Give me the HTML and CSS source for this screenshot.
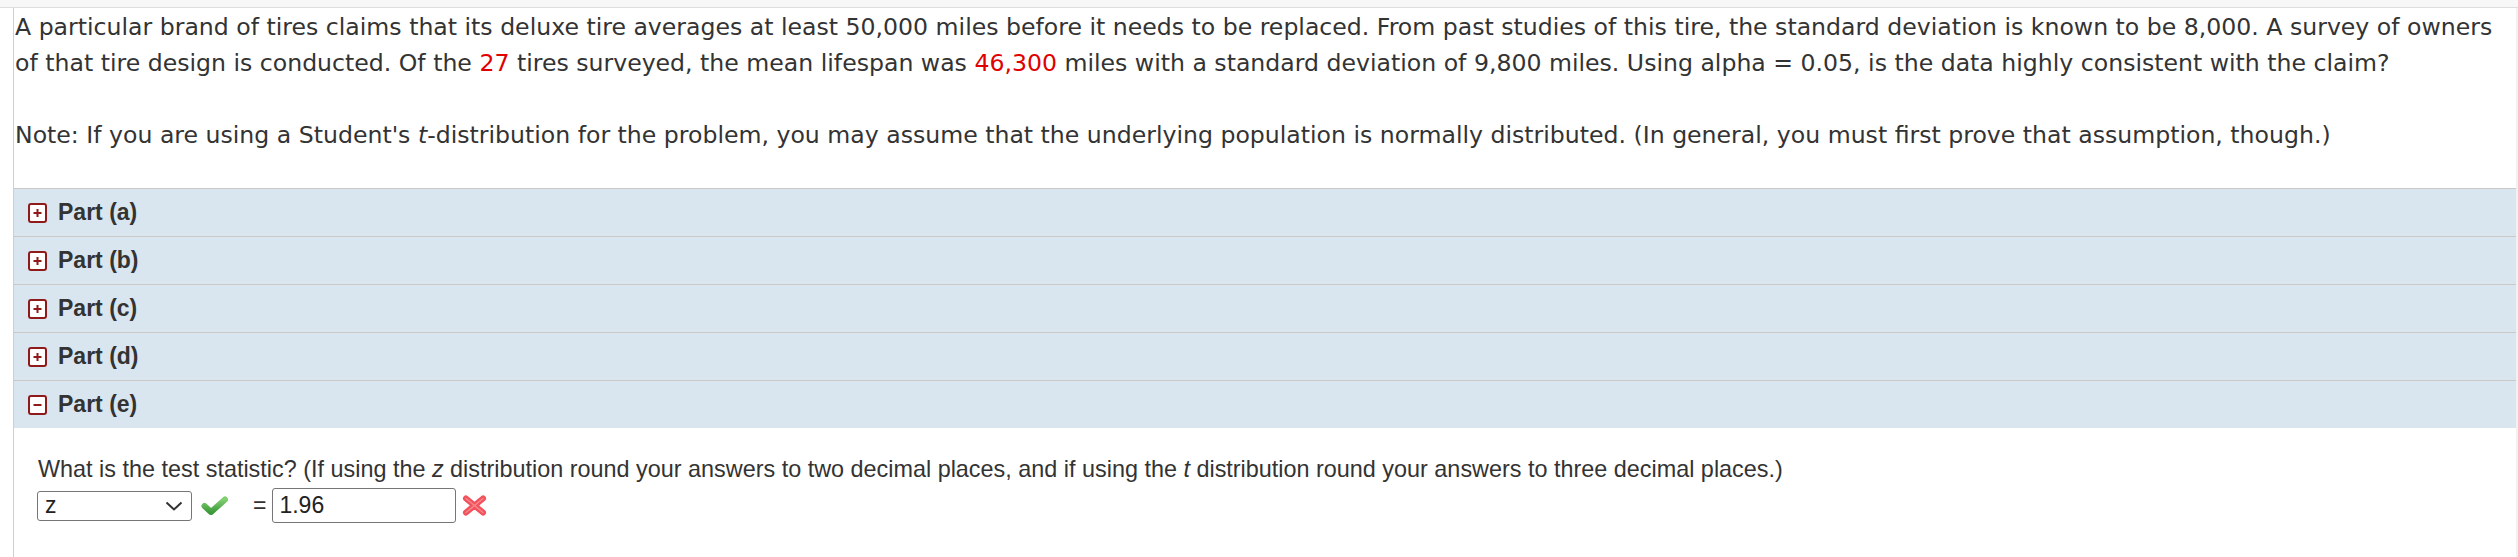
FILE: index.html
```html
<!DOCTYPE html>
<html lang="en">
<head>
<meta charset="utf-8">
<title>Hypothesis test question</title>
<link rel="stylesheet" href="styles.css">
</head>
<body>
<div class="topband"></div>
<div class="page">
  <div class="gutter-left"></div>
  <main class="main">
    <div class="question">
      <p class="stem">A particular brand of tires claims that its deluxe tire averages at least 50,000 miles before it needs to be replaced. From past studies of this tire, the standard deviation is known to be 8,000. A survey of owners of that tire design is conducted. Of the <span class="red">27</span> tires surveyed, the mean lifespan was <span class="red">46,300</span> miles with a standard deviation of 9,800 miles. Using alpha = 0.05, is the data highly consistent with the claim?</p>
      <p class="stem note">Note: If you are using a Student's <i>t</i>-distribution for the problem, you may assume that the underlying population is normally distributed. (In general, you must first prove that assumption, though.)</p>
    </div>

    <div class="parts">
      <div class="part">
        <span class="toggle"><svg viewBox="0 0 19 20" width="19" height="20"><rect x="1" y="1" width="17" height="18" rx="2" ry="2" fill="#fff" stroke="#8e1a1a" stroke-width="2"/><path d="M5.5 10 H13.5 M9.5 6 V14" stroke="#8e1a1a" stroke-width="2"/></svg></span>
        <span class="part-label">Part (a)</span>
      </div>
      <div class="part">
        <span class="toggle"><svg viewBox="0 0 19 20" width="19" height="20"><rect x="1" y="1" width="17" height="18" rx="2" ry="2" fill="#fff" stroke="#8e1a1a" stroke-width="2"/><path d="M5.5 10 H13.5 M9.5 6 V14" stroke="#8e1a1a" stroke-width="2"/></svg></span>
        <span class="part-label">Part (b)</span>
      </div>
      <div class="part">
        <span class="toggle"><svg viewBox="0 0 19 20" width="19" height="20"><rect x="1" y="1" width="17" height="18" rx="2" ry="2" fill="#fff" stroke="#8e1a1a" stroke-width="2"/><path d="M5.5 10 H13.5 M9.5 6 V14" stroke="#8e1a1a" stroke-width="2"/></svg></span>
        <span class="part-label">Part (c)</span>
      </div>
      <div class="part">
        <span class="toggle"><svg viewBox="0 0 19 20" width="19" height="20"><rect x="1" y="1" width="17" height="18" rx="2" ry="2" fill="#fff" stroke="#8e1a1a" stroke-width="2"/><path d="M5.5 10 H13.5 M9.5 6 V14" stroke="#8e1a1a" stroke-width="2"/></svg></span>
        <span class="part-label">Part (d)</span>
      </div>
      <div class="part">
        <span class="toggle"><svg viewBox="0 0 19 20" width="19" height="20"><rect x="1" y="1" width="17" height="18" rx="2" ry="2" fill="#fff" stroke="#8e1a1a" stroke-width="2"/><path d="M5.5 10 H13.5" stroke="#8e1a1a" stroke-width="2"/></svg></span>
        <span class="part-label">Part (e)</span>
      </div>
    </div>

    <div class="part-body">
      <p class="prompt">What is the test statistic? (If using the <i>z</i> distribution round your answers to two decimal places, and if using the <i>t</i> distribution round your answers to three decimal places.)</p>
      <div class="controls">
        <div class="select">
          <span class="select-value">z</span>
          <svg class="chevron" viewBox="0 0 18 10" width="18" height="10"><path d="M1.5 1.5 L9 8.5 L16.5 1.5" fill="none" stroke="#333" stroke-width="2"/></svg>
        </div>
        <svg class="check" viewBox="0 0 27 19" width="27" height="19">
          <defs>
            <linearGradient id="g" x1="0" y1="0" x2="0" y2="1">
              <stop offset="0" stop-color="#82cf72"/>
              <stop offset="1" stop-color="#3d9a3a"/>
            </linearGradient>
          </defs>
          <path d="M3.5 10 L10 16 L24 3.5" fill="none" stroke="url(#g)" stroke-width="6" stroke-linecap="round" stroke-linejoin="round"/>
        </svg>
        <span class="equals">=</span>
        <div class="answer">1.96</div>
        <svg class="cross" viewBox="0 0 25 21" width="25" height="21">
          <path d="M4 3.5 L21 17.5 M21 3.5 L4 17.5" fill="none" stroke="#f2525c" stroke-width="6" stroke-linecap="round"/>
          <path d="M4 3.5 L21 17.5 M21 3.5 L4 17.5" fill="none" stroke="#f7858b" stroke-width="1.5" stroke-linecap="round"/>
        </svg>
      </div>
    </div>
  </main>
  <div class="gutter-right"></div>
</div>
</body>
</html>
```

FILE: styles.css
```css
html, body {
  margin: 0;
  padding: 0;
  background: #ffffff;
}

body {
  height: 557px;
  display: flex;
  flex-direction: column;
  overflow: hidden;
}

.topband {
  height: 7px;
  background: #f7f7f7;
  border-bottom: 1px solid #dedede;
  flex: none;
}

.page {
  flex: 1;
  display: flex;
}

.gutter-left {
  width: 13px;
  flex: none;
}

.gutter-right {
  width: 2px;
  flex: none;
  background: #f1f1f1;
}

.main {
  flex: 1;
  border-left: 1px solid #cfcfcf;
  background: #fff;
}

.question {
  padding: 1px 6px 0 1px;
}

.stem {
  margin: 0;
  font-family: "DejaVu Sans", Verdana, sans-serif;
  font-size: 23.6px;
  line-height: 36px;
  color: #333333;
}

.stem i {
  font-style: oblique;
}

.note {
  margin-top: 36px;
}

.red {
  color: #e00000;
}

.parts {
  margin-top: 35px;
}

.part {
  height: 47px;
  border-top: 1px solid #c9c9c9;
  background: #d9e6f0;
  display: flex;
  align-items: center;
  padding-left: 14px;
  gap: 11px;
}

.toggle {
  display: flex;
  width: 19px;
  height: 20px;
}

.part-label {
  font-family: "Liberation Sans", Arial, sans-serif;
  font-weight: bold;
  font-size: 23px;
  color: #333333;
}

.part-body {
  padding: 0 23px;
  font-family: "Liberation Sans", Arial, sans-serif;
  color: #333333;
}

.prompt {
  margin: 28px 0 0 1px;
  font-size: 23.4px;
  line-height: 26px;
}

.controls {
  margin-top: 6px;
  display: flex;
  align-items: center;
  height: 35px;
}

.select {
  border: 1px solid #767676;
  border-radius: 3px;
  display: flex;
  align-items: center;
  justify-content: space-between;
  padding: 0 8px 0 7px;
  box-sizing: border-box;
  width: 155px;
  height: 30px;
  font-size: 23px;
  color: #222;
}

.chevron {
  display: block;
}

.check {
  margin-left: 9px;
  display: block;
}

.equals {
  margin-left: 25px;
  font-size: 23px;
  color: #333;
}

.answer {
  margin-left: 6px;
  width: 184px;
  height: 35px;
  box-sizing: border-box;
  border: 1px solid #767676;
  border-radius: 3px;
  padding: 0 6px;
  display: flex;
  align-items: center;
  font-size: 23px;
  color: #222;
}

.cross {
  margin-left: 6px;
  display: block;
}
```
